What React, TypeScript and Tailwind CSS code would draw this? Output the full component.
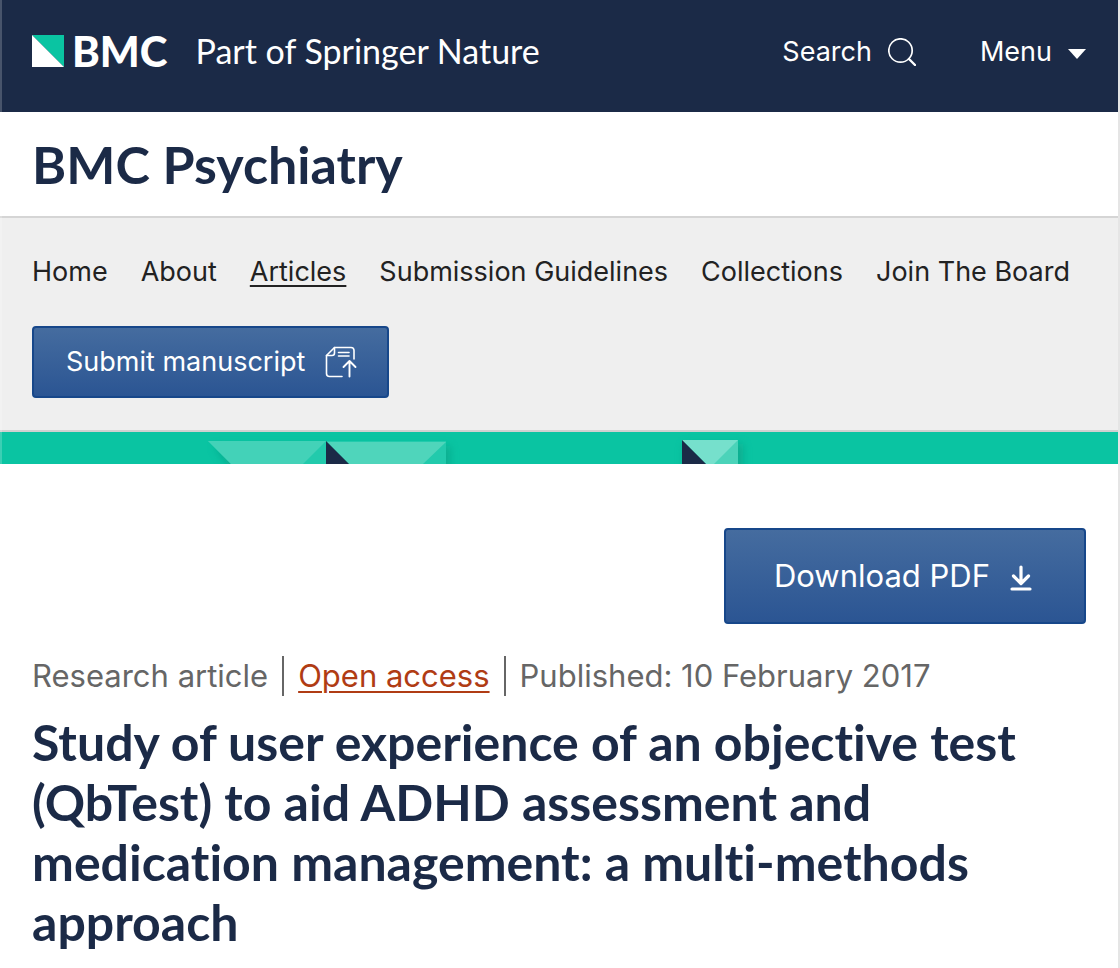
const sans = "font-['Inter',sans-serif]";
const display = "font-['Lato',sans-serif] [font-variant-ligatures:none]";
const blueBtn =
  "flex items-center rounded border-2 border-[#17478a] bg-linear-to-b from-[#456c9f] to-[#2b5593] text-white";

const navItems = ["Home", "About", "Articles", "Submission Guidelines", "Collections", "Join The Board"];

function SearchIcon() {
  return (
    <svg width="28" height="28" viewBox="0 0 28 28" fill="none" stroke="currentColor" aria-hidden="true">
      <circle cx="12.5" cy="12.5" r="11.7" strokeWidth="1.7" />
      <path d="M21 21L27 27" strokeWidth="2.4" strokeLinecap="round" />
    </svg>
  );
}

function SubmitIcon() {
  return (
    <svg
      width="32"
      height="32"
      viewBox="0 0 32 32"
      fill="none"
      stroke="currentColor"
      strokeWidth="1.6"
      strokeLinecap="round"
      strokeLinejoin="round"
      aria-hidden="true"
    >
      <path d="M17 30.5H4.5A3 3 0 0 1 1.5 27.5V9.5L9.5 1.5H26A3 3 0 0 1 29 4.5V13" />
      <path d="M1.5 9.5H7A2.5 2.5 0 0 0 9.5 7V1.5" />
      <path d="M13.5 6.5H24M13.5 10H24" />
      <path d="M24.5 30.5V15.5M18.5 21L24.5 15L30.5 21" strokeWidth="1.9" />
    </svg>
  );
}

function DownloadIcon() {
  return (
    <svg
      width="22"
      height="26"
      viewBox="0 0 22 26"
      fill="none"
      stroke="currentColor"
      strokeWidth="3.2"
      strokeLinecap="round"
      strokeLinejoin="round"
      className="mt-1"
      aria-hidden="true"
    >
      <path d="M11 2V18M3.5 11L11 18.5L18.5 11M2 24H20" />
    </svg>
  );
}

// Decorative strip of folded triangles under the navigation.
function Banner() {
  return (
    <div className="h-8 overflow-hidden bg-[#0ac4a2]">
      <svg width="760" height="32" viewBox="0 0 760 32" aria-hidden="true">
        <defs>
          <filter id="shade" x="-20%" y="-50%" width="140%" height="200%">
            <feGaussianBlur stdDeviation="4" />
          </filter>
        </defs>
        <g fill="#08a286" opacity="0.7" filter="url(#shade)">
          <path d="M214 14H450V50H240Z" />
          <path d="M684 12H743V50H684Z" />
        </g>
        <path d="M208 9H446V32H231Z" fill="#22caac" />
        <path d="M208 9H326L303 32H231Z" fill="#43d2b8" />
        <path d="M327 10H446L423 32H349Z" fill="#4fd5bb" />
        <path d="M326 9V32H349Z" fill="#1b2a47" />
        <path d="M682 8H738V32H706Z" fill="#4bd3b9" />
        <path d="M682 8H738L714 32H706Z" fill="#76e0cc" />
        <path d="M682 8V32H706Z" fill="#1b2a47" />
      </svg>
    </div>
  );
}

function TopBar() {
  return (
    <header className="flex h-28 items-start justify-between bg-[#1b2a47] px-8 text-white">
      <a href="#" className="flex h-[102px] items-center">
        <svg width="32" height="32" viewBox="0 0 32 32" aria-hidden="true">
          <path d="M0 0H32V32Z" fill="#0ac4a2" />
          <path d="M0 0V32H32Z" fill="#fff" />
        </svg>
        <span className={`${display} ml-2 text-[42px] font-black leading-8`}>BMC</span>
        <span className={`${display} ml-7 text-[34px] leading-8`}>Part of Springer Nature</span>
      </a>
      <div className={`${sans} flex h-26 items-center text-[27px]`}>
        <button type="button" className="flex items-center gap-4">
          Search
          <SearchIcon />
        </button>
        <button type="button" className="ml-16 flex items-center gap-4">
          Menu
          <svg width="18" height="10" viewBox="0 0 18 10" fill="currentColor" className="mt-1" aria-hidden="true">
            <path d="M0 0H18L9 10Z" />
          </svg>
        </button>
      </div>
    </header>
  );
}

function JournalNav() {
  return (
    <nav className={`${sans} border-b-2 border-[#d0d0d0] bg-[#efefef] px-8 pb-8 pt-9`}>
      <ul className="flex flex-wrap gap-x-[33px] text-[27px] leading-9 text-[#222]">
        {navItems.map((item) => (
          <li key={item}>
            <a
              href="#"
              className={item === "Articles" ? "underline decoration-2 underline-offset-4" : undefined}
            >
              {item}
            </a>
          </li>
        ))}
      </ul>
      <button type="button" className={`${blueBtn} mt-9 h-18 gap-5 pl-8 pr-[30px] text-[27px]`}>
        Submit manuscript
        <SubmitIcon />
      </button>
    </nav>
  );
}

function Article() {
  return (
    <main className="px-8 pb-4 pt-16">
      <div className="flex justify-end">
        <button type="button" className={`${blueBtn} ${sans} h-24 gap-5 pl-12 pr-13 text-[31px]`}>
          Download PDF
          <DownloadIcon />
        </button>
      </div>
      <ul className={`${sans} mt-8 flex text-[31px] leading-10 text-[#666]`}>
        <li className="border-r-2 border-[#666] pr-3.5">Research article</li>
        <li className="border-r-2 border-[#666] px-3.5">
          <a href="#" className="text-[#b03c14] underline decoration-2 underline-offset-4">
            Open access
          </a>
        </li>
        <li className="pl-3.5">Published: 10 February 2017</li>
      </ul>
      <h1 className={`${display} mt-4 text-[50px] font-bold leading-[60px] text-[#1b2a47]`}>
        Study of user experience of an objective test (QbTest) to aid ADHD assessment and medication management: a
        multi-methods approach
      </h1>
    </main>
  );
}

export default function App() {
  return (
    <div className="relative min-h-screen border-r-2 border-[#e5e5e5] bg-white">
      <TopBar />
      <div className="border-b-2 border-[#d5d5d5] px-8 py-5">
        <a href="#" className={`${display} block text-[52px] font-bold leading-16 text-[#1b2a47]`}>
          BMC Psychiatry
        </a>
      </div>
      <JournalNav />
      <Banner />
      <Article />
      <div className="absolute inset-y-0 left-0 w-0.5 bg-white/20" />
    </div>
  );
}
